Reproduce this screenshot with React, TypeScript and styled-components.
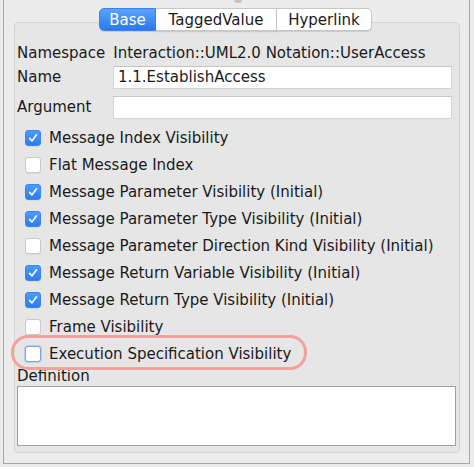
import styled, { createGlobalStyle } from 'styled-components';

const GlobalStyle = createGlobalStyle`
  html, body {
    margin: 0;
    padding: 0;
    background: #ececec;
  }
  body {
    font-family: "DejaVu Sans", "Liberation Sans", sans-serif;
    color: #1a1a1a;
  }
`;

type Option = { label: string; checked: boolean; highlight?: boolean };

const options: Option[] = [
  { label: 'Message Index Visibility', checked: true },
  { label: 'Flat Message Index', checked: false },
  { label: 'Message Parameter Visibility (Initial)', checked: true },
  { label: 'Message Parameter Type Visibility (Initial)', checked: true },
  { label: 'Message Parameter Direction Kind Visibility (Initial)', checked: false },
  { label: 'Message Return Variable Visibility (Initial)', checked: true },
  { label: 'Message Return Type Visibility (Initial)', checked: true },
  { label: 'Frame Visibility', checked: false },
  { label: 'Execution Specification Visibility', checked: false, highlight: true }
];

const tabs = [
  { name: 'Base', width: 57 },
  { name: 'TaggedValue', width: 121 },
  { name: 'Hyperlink', width: 95 }
];

const CheckMark = () => (
  <svg width="10" height="10" viewBox="0 0 10 10">
    <path
      d="M1.6 5.4 L4 7.9 L8.5 1.8"
      fill="none"
      stroke="#fff"
      strokeWidth="1.6"
      strokeLinecap="round"
      strokeLinejoin="round"
    />
  </svg>
);

const App = () => {
  return (
    <>
      <GlobalStyle />
      <Window>
        <TopNub />
        <TabBar>
          {tabs.map((t, i) => (
            <Tab
              key={t.name}
              $width={t.width}
              $active={i === 0}
              $first={i === 0}
              $last={i === tabs.length - 1}
            >
              {t.name}
            </Tab>
          ))}
        </TabBar>
        <Panel>
          <InfoRow>
            <Label>Namespace</Label>
            <span>Interaction::UML2.0 Notation::UserAccess</span>
          </InfoRow>
          <FieldRow>
            <Label>Name</Label>
            <Input defaultValue="1.1.EstablishAccess" />
          </FieldRow>
          <FieldRow>
            <Label>Argument</Label>
            <Input defaultValue="" />
          </FieldRow>
          <CheckList>
            {options.map((o) => (
              <CheckRow key={o.label} $highlight={o.highlight}>
                <Box $checked={o.checked} $focus={o.highlight}>
                  {o.checked && <CheckMark />}
                </Box>
                <span>{o.label}</span>
              </CheckRow>
            ))}
          </CheckList>
          <DefLabel>Definition</DefLabel>
          <TextArea />
        </Panel>
      </Window>
    </>
  );
};
export default App;

const Window = styled.div`
  position: relative;
  margin-left: 3px;
  width: 467px;
  height: 464px;
  box-sizing: border-box;
  border: 1px solid #a6a6a6;
  border-top: none;
  background: #ececec;
  padding: 8px 9px 0 10px;
  font-size: 15px;
`;

const TopNub = styled.div`
  position: absolute;
  top: 0;
  left: 230px;
  width: 8px;
  height: 3px;
  background: #c4c4c4;
  border-radius: 0 0 4px 4px;
`;

const TabBar = styled.div`
  position: relative;
  z-index: 1;
  display: flex;
  padding-left: 85px;
  height: 23px;
`;

const Tab = styled.div<{ $width: number; $active?: boolean; $first?: boolean; $last?: boolean }>`
  display: flex;
  align-items: center;
  justify-content: center;
  box-sizing: border-box;
  width: ${({ $width }) => $width}px;
  height: 23px;
  font-size: 15px;
  color: ${({ $active }) => ($active ? '#fff' : '#1a1a1a')};
  background: ${({ $active }) => ($active ? 'linear-gradient(#5aa3fb, #2a78f2)' : '#ffffff')};
  border: 1px solid ${({ $active }) => ($active ? '#3a82ee' : '#c6c6c6')};
  border-left: ${({ $first }) => ($first ? '1px solid #3a82ee' : 'none')};
  border-radius: ${({ $first, $last }) => ($first ? '5px 0 0 5px' : $last ? '0 5px 5px 0' : '0')};
  box-shadow: 0 1px 1px rgba(0, 0, 0, 0.12);
`;

const Panel = styled.div`
  margin-top: -9px;
  width: 446px;
  height: 431px;
  box-sizing: border-box;
  background: #e6e6e6;
  border: 1px solid #d6d6d6;
  border-radius: 4px;
  padding: 19px 3px 0 2px;
  display: flex;
  flex-direction: column;
`;

const InfoRow = styled.div`
  display: flex;
  align-items: center;
  height: 22px;
  gap: 8px;
  white-space: nowrap;
`;

const Label = styled.span`
  flex: none;
  min-width: 88px;
`;

const FieldRow = styled.div`
  display: grid;
  grid-template-columns: 96px 1fr;
  align-items: center;
  height: 24px;
  margin-top: 1px;
  margin-bottom: 5px;
  padding-right: 4px;
`;

const Input = styled.input`
  height: 23px;
  box-sizing: border-box;
  border: 1px solid #d4d4d4;
  border-top-color: #c4c4c4;
  background: #fff;
  font: inherit;
  font-size: 15px;
  color: #1a1a1a;
  padding: 0 4px;
  outline: none;
`;

const CheckList = styled.div`
  display: flex;
  flex-direction: column;
`;

const CheckRow = styled.div<{ $highlight?: boolean }>`
  position: relative;
  display: flex;
  align-items: center;
  gap: 8px;
  height: 27px;
  padding-left: 8px;
  white-space: nowrap;

  ${({ $highlight }) =>
    $highlight &&
    `
    &::before {
      content: '';
      position: absolute;
      left: -6px;
      top: -5px;
      width: 296px;
      height: 35px;
      box-sizing: border-box;
      border: 3px solid #f2a29c;
      border-radius: 17px;
      pointer-events: none;
    }
  `}
`;

const Box = styled.span<{ $checked?: boolean; $focus?: boolean }>`
  display: flex;
  align-items: center;
  justify-content: center;
  width: 16px;
  height: 16px;
  box-sizing: border-box;
  border-radius: 3px;
  background: ${({ $checked }) => ($checked ? 'linear-gradient(#4d9bfa, #2d7cf0)' : '#fff')};
  border: 1px solid
    ${({ $checked, $focus }) => ($checked ? '#3a85ef' : $focus ? '#7aa6e0' : '#c9c9c9')};
  box-shadow: ${({ $focus }) =>
    $focus ? '0 0 0 1px rgba(120,160,220,0.35)' : '0 1px 0 rgba(0,0,0,0.05)'};
`;

const DefLabel = styled.div`
  height: 19px;
  line-height: 19px;
`;

const TextArea = styled.div`
  height: 60px;
  box-sizing: border-box;
  border: 1px solid #a0a0a0;
  background: #fff;
`;
